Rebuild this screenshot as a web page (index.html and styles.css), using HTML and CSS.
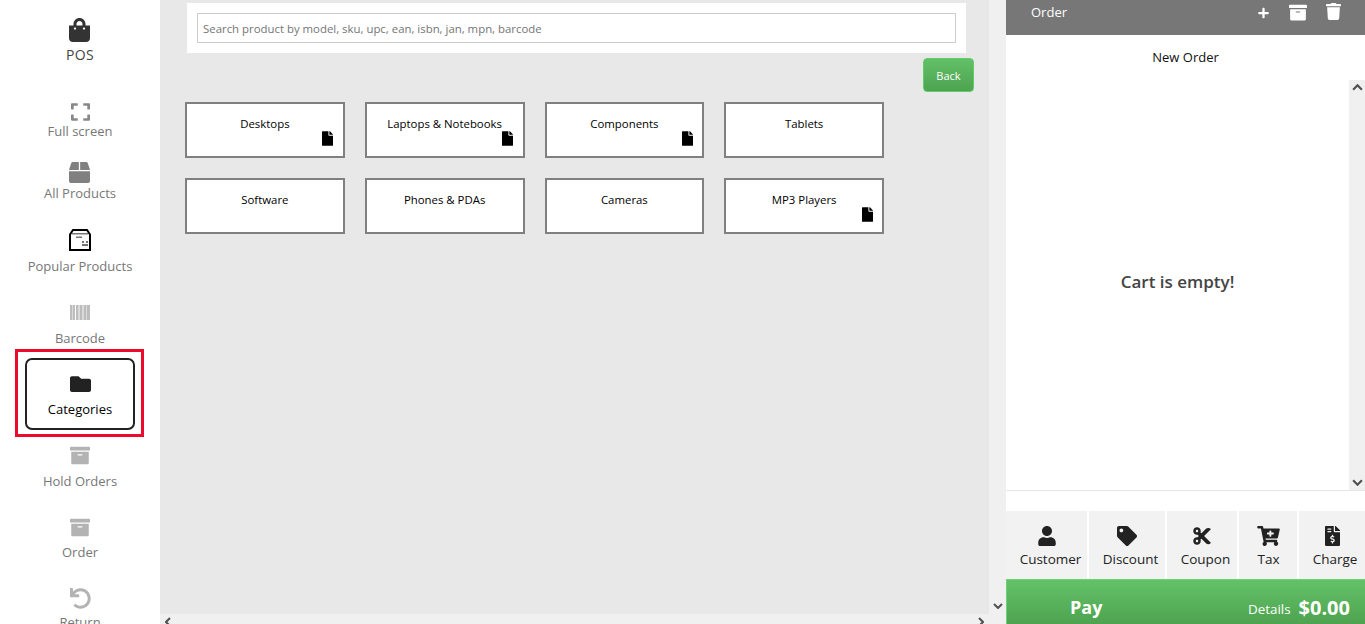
FILE: index.html
```html
<!DOCTYPE html>
<html lang="en">
<head>
<meta charset="utf-8">
<title>POS</title>
<link rel="stylesheet" href="styles.css">
</head>
<body>
<div class="app">
  <nav class="sidebar">
    <a class="nav-item pos">
      <svg class="ic ic-pos" viewBox="0 0 448 512"><path d="M352 160v-32C352 57.42 294.579 0 224 0 153.42 0 96 57.42 96 128v32H0v272c0 44.183 35.817 80 80 80h288c44.183 0 80-35.817 80-80V160h-96zm-192-32c0-35.29 28.71-64 64-64s64 28.71 64 64v32H160v-32zm160 120c-13.255 0-24-10.745-24-24s10.745-24 24-24 24 10.745 24 24-10.745 24-24 24zm-192 0c-13.255 0-24-10.745-24-24s10.745-24 24-24 24 10.745 24 24-10.745 24-24 24z"/></svg>
      <span>POS</span>
    </a>
    <a class="nav-item full">
      <svg class="ic ic-full" viewBox="0 0 448 512" preserveAspectRatio="none"><path d="M0 180V56c0-13.3 10.7-24 24-24h124c6.6 0 12 5.4 12 12v40c0 6.6-5.4 12-12 12H64v84c0 6.6-5.4 12-12 12H12c-6.6 0-12-5.4-12-12zM288 44v40c0 6.6 5.4 12 12 12h84v84c0 6.6 5.4 12 12 12h40c6.6 0 12-5.4 12-12V56c0-13.3-10.7-24-24-24H300c-6.6 0-12 5.4-12 12zm148 276h-40c-6.6 0-12 5.4-12 12v84h-84c-6.6 0-12 5.4-12 12v40c0 6.6 5.4 12 12 12h124c13.3 0 24-10.7 24-24V332c0-6.6-5.4-12-12-12zM160 468v-40c0-6.6-5.4-12-12-12H64v-84c0-6.6-5.4-12-12-12H12c-6.6 0-12 5.4-12 12v124c0 13.3 10.7 24 24 24h124c6.6 0 12-5.4 12-12z"/></svg>
      <span>Full screen</span>
    </a>
    <a class="nav-item all">
      <svg class="ic ic-all" viewBox="0 0 512 512"><path d="M509.5 184.6L458.9 32.8C452.4 13.2 434.1 0 413.4 0H272v192h238.7c-.4-2.5-.4-5-1.2-7.4zM240 0H98.6c-20.7 0-39 13.2-45.5 32.8L2.5 184.6c-.8 2.4-.8 4.9-1.2 7.4H240V0zM0 224v240c0 26.5 21.5 48 48 48h416c26.5 0 48-21.5 48-48V224H0z"/></svg>
      <span>All Products</span>
    </a>
    <a class="nav-item popular">
      <svg class="ic ic-popular" viewBox="0 0 22 22"><path d="M1 21V5.500L4 1h14l3 4.500V21z" fill="none" stroke="#000" stroke-width="2"/><path d="M3 4h16v1.500H3zM7 7.500h6V9H7zM13 12h2v2h-2zM17 12h2v2h-2zM13 15h6v2h-6z"/></svg>
      <span>Popular Products</span>
    </a>
    <a class="nav-item barcode">
      <svg class="ic ic-barcode" viewBox="0 0 20 15"><path fill="#bdbdbd" d="M0 0h2v15H0zM3 0h2v15H3zM6 0h2v15H6zM10 0h2v15h-2zM14 0h2v15h-2zM17 0h3v15h-3z"/><path fill="#dadada" d="M2 0h1v15H2zM8 0h2v15H8zM12 0h2v15h-2zM16 0h1v15h-1z"/></svg>
      <span>Barcode</span>
    </a>
    <div class="highlight">
      <a class="nav-item active">
        <svg class="ic ic-folder" viewBox="0 64 512 384"><path d="M464 128H272l-64-64H48C21.49 64 0 85.49 0 112v288c0 26.51 21.49 48 48 48h416c26.51 0 48-21.49 48-48V176c0-26.51-21.49-48-48-48z"/></svg>
        <span>Categories</span>
      </a>
    </div>
    <a class="nav-item hold">
      <svg class="ic ic-archive" viewBox="0 32 512 448"><path d="M32 448c0 17.7 14.3 32 32 32h384c17.7 0 32-14.3 32-32V160H32v288zm160-212c0-6.600 5.400-12 12-12h104c6.600 0 12 5.400 12 12v8c0 6.600-5.400 12-12 12H204c-6.600 0-12-5.400-12-12v-8zM480 32H32C14.300 32 0 46.300 0 64v48c0 8.800 7.200 16 16 16h480c8.800 0 16-7.200 16-16V64c0-17.700-14.300-32-32-32z"/></svg>
      <span>Hold Orders</span>
    </a>
    <a class="nav-item order">
      <svg class="ic ic-archive" viewBox="0 32 512 448"><path d="M32 448c0 17.7 14.3 32 32 32h384c17.7 0 32-14.3 32-32V160H32v288zm160-212c0-6.600 5.400-12 12-12h104c6.600 0 12 5.400 12 12v8c0 6.600-5.400 12-12 12H204c-6.600 0-12-5.400-12-12v-8zM480 32H32C14.300 32 0 46.300 0 64v48c0 8.800 7.200 16 16 16h480c8.800 0 16-7.200 16-16V64c0-17.700-14.300-32-32-32z"/></svg>
      <span>Order</span>
    </a>
    <a class="nav-item return">
      <svg class="ic ic-return" viewBox="0 0 512 512"><path d="M212.333 224.333H12c-6.627 0-12-5.373-12-12V12C0 5.373 5.373 0 12 0h48c6.627 0 12 5.373 12 12v78.112C117.773 39.279 184.26 7.47 258.175 8.007c136.906.994 246.448 111.623 246.157 248.532C504.041 393.258 393.12 504 256.333 504c-64.089 0-122.496-24.313-166.51-64.215-5.099-4.622-5.334-12.554-.467-17.42l33.967-33.967c4.474-4.474 11.662-4.717 16.401-.525C170.76 415.336 211.58 432 256.333 432c97.268 0 176-78.716 176-176 0-97.267-78.716-176-176-176-58.496 0-110.28 28.476-142.274 72.333h98.274c6.627 0 12 5.373 12 12v48c0 6.627-5.373 12-12 12z"/></svg>
      <span>Return</span>
    </a>
  </nav>

  <div class="center">
    <div class="center-row">
      <main class="main">
        <div class="search-card">
          <input class="search" type="text" placeholder="Search product by model, sku, upc, ean, isbn, jan, mpn, barcode">
        </div>
        <div class="back-row"><button class="back" type="button">Back</button></div>
        <div class="cats">
          <div class="cat">Desktops<svg class="file" viewBox="0 0 384 512"><path d="M224 136V0H24C10.7 0 0 10.7 0 24v464c0 13.3 10.7 24 24 24h336c13.3 0 24-10.700 24-24V160H248c-13.200 0-24-10.800-24-24zm160-14.100v6.100H256V0h6.100c6.400 0 12.500 2.500 17 7l97.900 98c4.500 4.500 7 10.600 7 16.900z"/></svg></div>
          <div class="cat">Laptops &amp; Notebooks<svg class="file" viewBox="0 0 384 512"><path d="M224 136V0H24C10.7 0 0 10.7 0 24v464c0 13.3 10.7 24 24 24h336c13.3 0 24-10.700 24-24V160H248c-13.200 0-24-10.800-24-24zm160-14.100v6.100H256V0h6.100c6.400 0 12.500 2.500 17 7l97.900 98c4.500 4.500 7 10.600 7 16.900z"/></svg></div>
          <div class="cat">Components<svg class="file" viewBox="0 0 384 512"><path d="M224 136V0H24C10.7 0 0 10.7 0 24v464c0 13.3 10.7 24 24 24h336c13.3 0 24-10.700 24-24V160H248c-13.200 0-24-10.800-24-24zm160-14.100v6.100H256V0h6.100c6.400 0 12.500 2.500 17 7l97.900 98c4.500 4.500 7 10.600 7 16.900z"/></svg></div>
          <div class="cat">Tablets</div>
          <div class="cat">Software</div>
          <div class="cat">Phones &amp; PDAs</div>
          <div class="cat">Cameras</div>
          <div class="cat">MP3 Players<svg class="file" viewBox="0 0 384 512"><path d="M224 136V0H24C10.7 0 0 10.7 0 24v464c0 13.3 10.7 24 24 24h336c13.3 0 24-10.700 24-24V160H248c-13.200 0-24-10.800-24-24zm160-14.100v6.100H256V0h6.100c6.400 0 12.500 2.500 17 7l97.900 98c4.500 4.500 7 10.600 7 16.900z"/></svg></div>
        </div>
      </main>
      <div class="vbar">
        <svg class="arrow" viewBox="0 0 10 6"><path d="M1 1l4 4 4-4" fill="none" stroke="#505050" stroke-width="2"/></svg>
      </div>
    </div>
    <div class="hbar">
      <svg class="arrow-h" viewBox="0 0 6 10"><path d="M5 1L1 5l4 4" fill="none" stroke="#505050" stroke-width="2"/></svg>
      <svg class="arrow-h" viewBox="0 0 6 10"><path d="M1 1l4 4-4 4" fill="none" stroke="#505050" stroke-width="2"/></svg>
    </div>
  </div>

  <aside class="panel">
    <header class="panel-head">
      <span class="panel-title">Order</span>
      <svg class="hd-plus" viewBox="0 0 448 512"><path d="M416 208H272V64c0-17.670-14.330-32-32-32h-32c-17.670 0-32 14.330-32 32v144H32c-17.670 0-32 14.330-32 32v32c0 17.670 14.330 32 32 32h144v144c0 17.670 14.330 32 32 32h32c17.670 0 32-14.330 32-32V304h144c17.670 0 32-14.330 32-32v-32c0-17.670-14.330-32-32-32z"/></svg>
      <svg class="hd-archive" viewBox="0 32 512 448"><path d="M32 448c0 17.7 14.3 32 32 32h384c17.7 0 32-14.3 32-32V160H32v288zm160-212c0-6.600 5.400-12 12-12h104c6.600 0 12 5.400 12 12v8c0 6.600-5.400 12-12 12H204c-6.600 0-12-5.400-12-12v-8zM480 32H32C14.300 32 0 46.300 0 64v48c0 8.800 7.200 16 16 16h480c8.800 0 16-7.200 16-16V64c0-17.700-14.300-32-32-32z"/></svg>
      <svg class="hd-trash" viewBox="0 0 448 512"><path d="M432 32H312l-9.400-18.700A24 24 0 0 0 281.100 0H166.800a23.720 23.720 0 0 0-21.400 13.300L136 32H16A16 16 0 0 0 0 48v32a16 16 0 0 0 16 16h416a16 16 0 0 0 16-16V48a16 16 0 0 0-16-16zM53.200 467a48 48 0 0 0 47.900 45h245.800a48 48 0 0 0 47.900-45L416 128H32z"/></svg>
    </header>
    <div class="new-order">New Order</div>
    <div class="cart">
      <div class="cart-empty">Cart is empty!</div>
      <div class="cart-bar">
        <svg viewBox="0 0 10 6"><path d="M1 5l4-4 4 4" fill="none" stroke="#505050" stroke-width="2"/></svg>
        <svg viewBox="0 0 10 6"><path d="M1 1l4 4 4-4" fill="none" stroke="#505050" stroke-width="2"/></svg>
      </div>
    </div>
    <div class="spacer"></div>
    <div class="actions">
      <div class="action a1">
        <svg viewBox="0 0 448 512"><path d="M224 256c70.700 0 128-57.300 128-128S294.700 0 224 0 96 57.300 96 128s57.300 128 128 128zm89.600 32h-16.700c-22.200 10.200-46.900 16-72.900 16s-50.600-5.800-72.900-16h-16.700C60.200 288 0 348.200 0 422.400V464c0 26.500 21.500 48 48 48h352c26.500 0 48-21.500 48-48v-41.600c0-74.200-60.200-134.400-134.400-134.400z"/></svg>
        <span>Customer</span>
      </div>
      <div class="action a2">
        <svg viewBox="0 0 512 512"><path d="M0 252.118V48C0 21.490 21.490 0 48 0h204.118a48 48 0 0 1 33.941 14.059l211.882 211.882c18.745 18.745 18.745 49.137 0 67.882L293.823 497.941c-18.745 18.745-49.137 18.745-67.882 0L14.059 286.059A48 48 0 0 1 0 252.118zM112 64c-26.510 0-48 21.490-48 48s21.490 48 48 48 48-21.490 48-48-21.490-48-48-48z"/></svg>
        <span>Discount</span>
      </div>
      <div class="action a3">
        <svg viewBox="0 0 448 512"><path d="M278.060 256L444.480 89.570c4.690-4.690 4.690-12.290 0-16.970-32.800-32.800-85.990-32.800-118.790 0L210.180 188.120l-24.860-24.860c4.310-10.920 6.680-22.810 6.680-35.260 0-53.020-42.980-96-96-96S0 74.980 0 128s42.980 96 96 96c4.540 0 8.990-.32 13.360-.93L142.290 256l-32.930 32.930c-4.370-.61-8.830-.93-13.360-.93-53.020 0-96 42.980-96 96s42.980 96 96 96 96-42.980 96-96c0-12.450-2.370-24.340-6.680-35.260l24.860-24.860L325.690 439.400c32.800 32.800 85.990 32.800 118.790 0 4.690-4.680 4.690-12.280 0-16.970L278.060 256zM96 160c-17.640 0-32-14.360-32-32s14.360-32 32-32 32 14.360 32 32-14.360 32-32 32zm0 256c-17.640 0-32-14.360-32-32s14.360-32 32-32 32 14.360 32 32-14.360 32-32 32z"/></svg>
        <span>Coupon</span>
      </div>
      <div class="action a4">
        <svg viewBox="0 0 576 512"><path d="M504.717 320H211.572l6.545 32h268.418c15.401 0 26.816 14.301 23.403 29.319l-5.517 24.276C523.112 414.668 536 433.828 536 456c0 31.202-25.519 56.444-56.824 55.994-29.823-.429-54.350-24.631-55.155-54.447-.44-16.287 6.085-31.049 16.803-41.548H231.176C241.553 426.165 248 440.326 248 456c0 31.813-26.528 57.431-58.670 55.938-28.540-1.325-51.751-24.385-53.251-52.917-1.158-22.034 10.436-41.455 28.051-51.586L93.883 64H24C10.745 64 0 53.255 0 40V24C0 10.745 10.745 0 24 0h102.529c11.401 0 21.228 8.021 23.513 19.190L159.208 64H551.990c15.401 0 26.816 14.301 23.403 29.319l-47.273 208C525.637 312.246 515.923 320 504.717 320zM408 168h-48v-40c0-8.837-7.163-16-16-16h-16c-8.837 0-16 7.163-16 16v40h-48c-8.837 0-16 7.163-16 16v16c0 8.837 7.163 16 16 16h48v40c0 8.837 7.163 16 16 16h16c8.837 0 16-7.163 16-16v-40h48c8.837 0 16-7.163 16-16v-16c0-8.837-7.163-16-16-16z"/></svg>
        <span>Tax</span>
      </div>
      <div class="action a5">
        <svg viewBox="0 0 384 512"><path d="M377 105L279.100 7c-4.500-4.500-10.600-7-17-7H256v128h128v-6.100c0-6.300-2.500-12.400-7-16.900zm-153 31V0H24C10.700 0 0 10.700 0 24v464c0 13.300 10.700 24 24 24h336c13.300 0 24-10.700 24-24V160H248c-13.200 0-24-10.800-24-24zM64 72c0-4.420 3.580-8 8-8h80c4.420 0 8 3.580 8 8v16c0 4.420-3.580 8-8 8H72c-4.420 0-8-3.580-8-8V72zm0 80v-16c0-4.420 3.580-8 8-8h80c4.420 0 8 3.580 8 8v16c0 4.420-3.580 8-8 8H72c-4.420 0-8-3.580-8-8zm144 263.880V440c0 4.420-3.580 8-8 8h-16c-4.420 0-8-3.580-8-8v-24.290c-11.290-.58-22.270-4.520-31.370-11.350-3.900-2.930-4.100-8.770-.57-12.140l11.750-11.210c2.770-2.640 6.890-2.760 10.130-.73 3.870 2.420 8.260 3.720 12.820 3.720h28.110c6.500 0 11.800-5.920 11.800-13.190 0-5.950-3.610-11.190-8.770-12.730l-45-13.500c-18.590-5.580-31.580-23.420-31.580-43.390 0-24.520 19.050-44.440 42.670-45.070V232c0-4.420 3.580-8 8-8h16c4.420 0 8 3.580 8 8v24.290c11.290.58 22.270 4.510 31.370 11.350 3.900 2.930 4.100 8.770.57 12.140l-11.750 11.210c-2.770 2.640-6.890 2.760-10.130.73-3.870-2.430-8.260-3.720-12.820-3.720h-28.110c-6.500 0-11.800 5.920-11.800 13.190 0 5.950 3.610 11.190 8.770 12.730l45 13.500c18.590 5.580 31.580 23.420 31.580 43.390 0 24.530-19.050 44.440-42.670 45.070z"/></svg>
        <span>Charge</span>
      </div>
    </div>
    <div class="pay">
      <span class="pay-label">Pay</span>
      <span class="pay-details">Details</span>
      <span class="pay-total">$0.00</span>
    </div>
  </aside>
</div>
</body>
</html>
```
FILE: styles.css
```css
* { box-sizing: border-box; }
html, body { margin: 0; height: 100%; overflow: hidden; }
body { font-family: "Open Sans", "Noto Sans", sans-serif; font-size: 13px; background: #fff; color: #000; }
.app { display: flex; width: 1365px; height: 624px; overflow: hidden; }

.sidebar { width: 160px; flex: none; height: 624px; overflow: hidden; padding-top: 18px; display: flex; flex-direction: column; align-items: center; }
.nav-item { display: flex; flex-direction: column; align-items: center; color: #777; line-height: 18px; white-space: nowrap; flex: none; }
.ic { display: block; fill: currentColor; }

.pos { color: #444; font-size: 14px; letter-spacing: .4px; }
.ic-pos { width: 21px; height: 24px; margin-bottom: 4px; fill: #333; }
.full { margin-top: 38px; }
.ic-full { width: 19px; height: 20px; fill: #888; }
.all { margin-top: 22px; }
.ic-all { width: 21px; height: 21px; margin-bottom: 1px; fill: #808080; }
.popular { margin-top: 27px; }
.ic-popular { width: 22px; height: 22px; margin-bottom: 6px; }
.barcode { margin-top: 30px; }
.ic-barcode { width: 20px; height: 15px; margin-bottom: 9px; }
.highlight { flex: none; margin: 2px 1px 0 0; width: 129px; height: 88px; border: 3px solid #ee0a2c; padding: 6px 7px; }
.active { width: 110px; height: 72px; border: 2px solid #222; border-radius: 7px; color: #000; padding-top: 16px; margin: 0; }
.ic-folder { width: 21px; height: 16px; margin-bottom: 8px; fill: #222; }
.hold { margin-top: 9px; }
.order { margin-top: 28px; }
.ic-archive { width: 20px; height: 19px; margin-bottom: 7px; fill: #b3b3b3; }
.order .ic-archive { margin-bottom: 6px; }
.return { margin-top: 27px; }
.ic-return { width: 21px; height: 21px; margin-bottom: 4px; fill: #b3b3b3; }

.center { width: 846px; flex: none; height: 624px; display: flex; flex-direction: column; background: #f0f0f0; }
.center-row { display: flex; height: 614px; flex: none; }
.main { width: 829px; flex: none; background: #e8e8e8; padding: 3px 0 0 25px; }
.search-card { margin-left: 2px; width: 779px; height: 50px; background: #fff; padding: 10px; }
.search { display: block; width: 100%; height: 30px; border: 1px solid #ccc; background: #fff; padding: 0 5px; font: 11.400px "Open Sans", sans-serif; color: #555; outline: none; border-radius: 0; }
.search::placeholder { color: #757575; opacity: 1; }
.back-row { display: flex; justify-content: flex-end; width: 789px; margin-top: 5px; }
.back { width: 51px; height: 34px; border: 1px solid #5fce68; border-radius: 4px; background: linear-gradient(#62c068, #4ea350); color: #fff; font: 11px "Open Sans", sans-serif; padding: 0; }
.cats { display: grid; grid-template-columns: repeat(4, 159.750px); grid-auto-rows: 56px; gap: 20px; margin-top: 10px; }
.cat { position: relative; background: #fff; border: 2px solid #808080; font-size: 11.400px; line-height: 16px; text-align: center; padding-top: 12px; color: #000; }
.file { position: absolute; right: 9.500px; bottom: 10px; width: 11px; height: 15px; fill: #000; }
.vbar { width: 17px; flex: none; display: flex; justify-content: center; align-items: flex-end; padding-bottom: 5px; }
.arrow { width: 10px; height: 6px; display: block; }
.hbar { height: 10px; width: 829px; display: flex; justify-content: space-between; padding: 3px 5px 0 5px; overflow: hidden; }
.arrow-h { width: 6px; height: 10px; display: block; flex: none; }

.panel { width: 359px; flex: none; height: 624px; display: flex; flex-direction: column; background: #fff; }
.panel-head { height: 35px; flex: none; background: #777; color: #fff; position: relative; display: flex; }
.panel-title { margin: 3px 0 0 25px; line-height: 18px; }
.panel-head svg { fill: #fff; position: absolute; }
.hd-plus { left: 252px; top: 7px; width: 11px; height: 12px; }
.hd-archive { left: 283px; top: 4px; width: 18px; height: 17px; }
.hd-trash { left: 320px; top: 3px; width: 15px; height: 17px; }
.new-order { height: 45px; flex: none; text-align: center; font-size: 13px; line-height: 18px; padding-top: 13px; color: #111; }
.cart { height: 411px; flex: none; display: flex; border-bottom: 1px solid #e6e6e6; }
.cart-empty { flex: 1; text-align: center; font-size: 17px; font-weight: 600; color: #444; padding-top: 190px; line-height: 24px; }
.cart-bar { width: 16px; flex: none; display: flex; flex-direction: column; justify-content: space-between; align-items: center; background: #f0f0f0; padding: 4px 0; }
.cart-bar svg { width: 11px; height: 7px; display: block; }
.spacer { height: 20px; flex: none; }
.actions { height: 68px; flex: none; display: grid; grid-template-columns: 81px 76px 70px 58px 66px; column-gap: 2px; }
.action { background: #f2f2f2; display: flex; flex-direction: column; align-items: center; padding-top: 15px; color: #222; line-height: 18px; font-size: 13.500px; }
.action svg { display: block; height: 20px; margin-bottom: 4px; fill: #222; }
.a1 svg { width: 18px; }
.a2 svg { width: 20px; }
.a3 svg { width: 18px; }
.a4 svg { width: 23px; }
.a5 svg { width: 15px; }
.a1 span { margin-left: 8px; }
.a2 span { margin-left: 7px; }
.a3 span { margin-left: 7px; }
.a4 span { margin-left: 1px; }
.a5 span { margin-left: 6px; }
.pay { height: 45px; flex: none; background: linear-gradient(#63c267, #4ea350); border: 1px solid #6fd077; border-width: 1px 0 0 1px; color: #fff; display: flex; align-items: center; padding: 10px 15px 0 63px; }
.pay-label { font-size: 18px; font-weight: 700; flex: 1; }
.pay-details { font-size: 13.400px; margin-right: 8px; padding-top: 3px; }
.pay-total { font-size: 20px; font-weight: 700; }
```
